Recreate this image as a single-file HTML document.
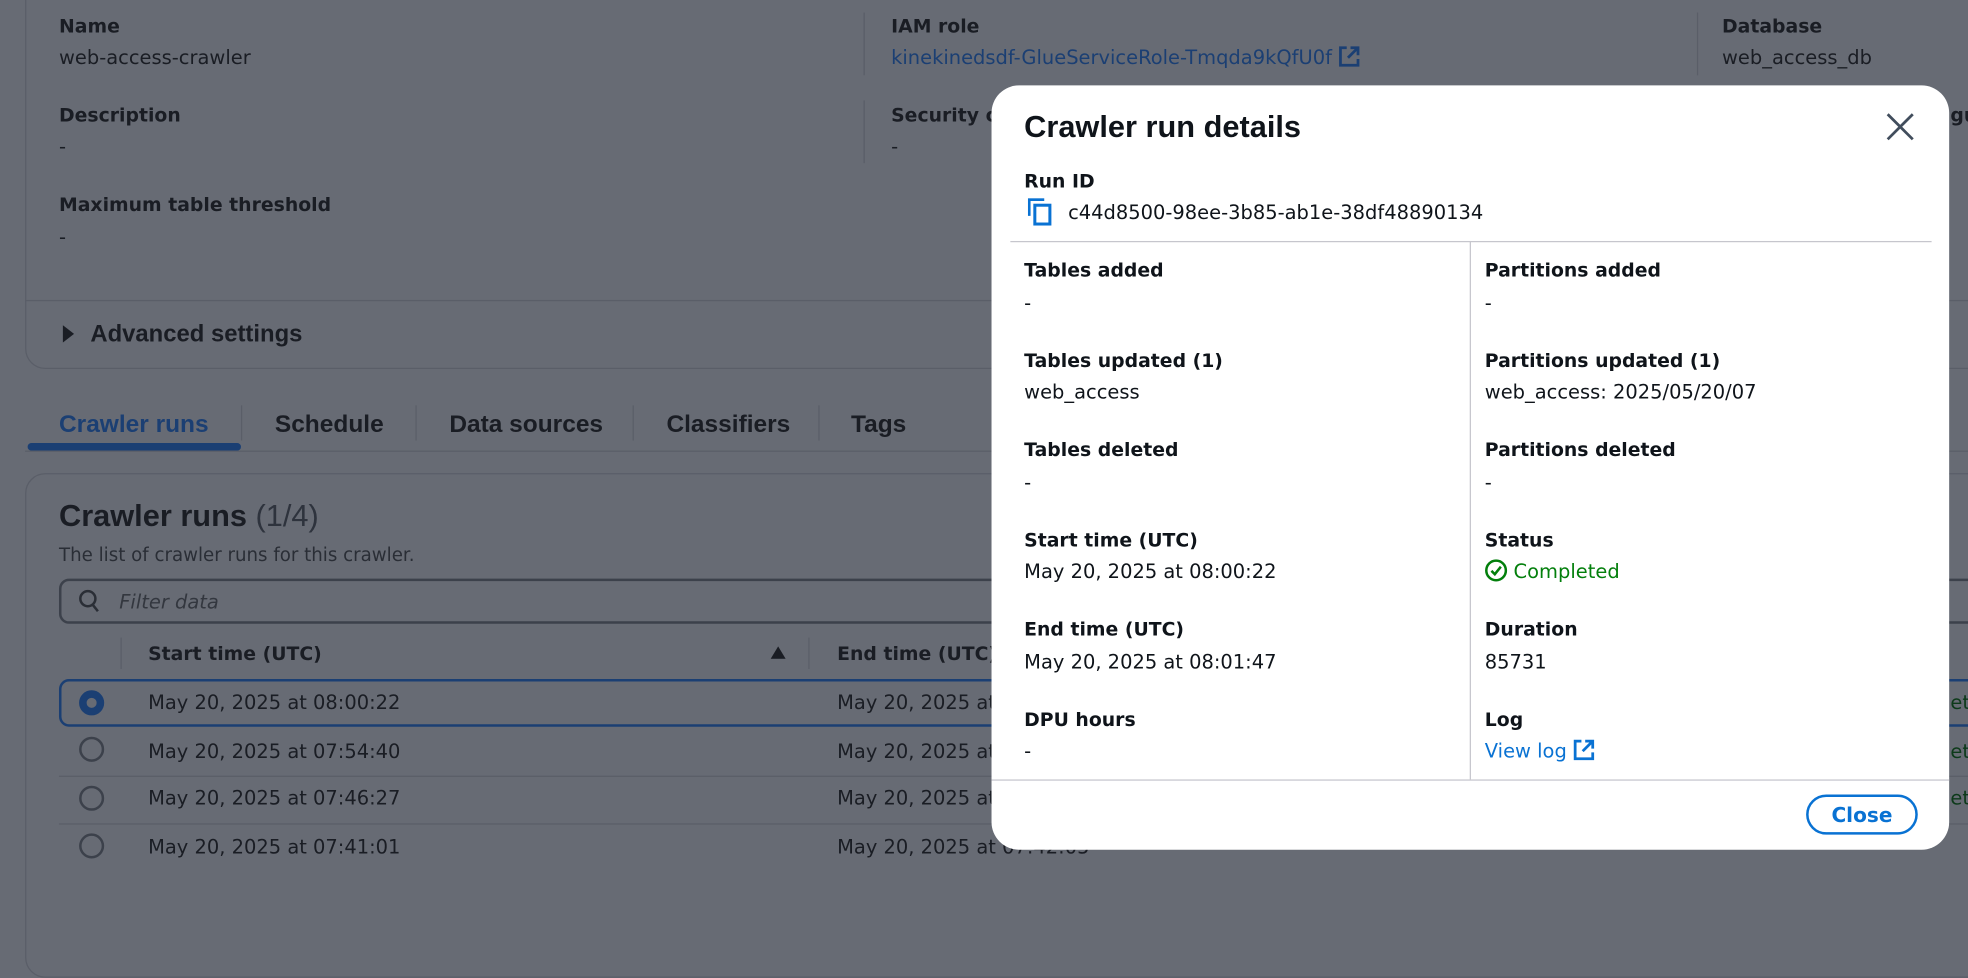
<!DOCTYPE html>
<html><head><meta charset="utf-8"><style>
html,body{margin:0;padding:0;width:1968px;height:873px;overflow:hidden;background:#676b74;}
#w{position:absolute;left:0;top:0;width:1568px;height:696px;transform:scale(1.2551);transform-origin:0 0;font-family:"DejaVu Sans","Liberation Sans",sans-serif;font-size:15.5px;color:#1a1d24;}
.a{position:absolute;white-space:nowrap;line-height:20px;transform:translateY(1px);}
.b{font-weight:bold;font-size:15px;}
.L{font-family:"Liberation Sans",sans-serif;}
.lk{color:#1b3f73;}
.vl{position:absolute;width:1px;background:#5a5e68;}
.hl{position:absolute;height:1px;background:#5a5e68;}
.m{position:absolute;left:790px;top:68px;width:763px;height:609px;background:#fff;border-radius:22px;color:#0f141a;}
.m .a{transform:translateY(-9.5px);}
</style></head><body><div id="w">
<div style="position:absolute;left:20px;top:-20px;width:1600px;height:312px;border:1px solid #5a5e68;border-radius:16px;"></div>
<div class="a b" style="left:47px;top:10px">Name</div>
<div class="a" style="left:47px;top:35px">web-access-crawler</div>
<div class="vl" style="left:688px;top:10px;height:50px"></div>
<div class="vl" style="left:688px;top:80px;height:50px"></div>
<div class="vl" style="left:1352px;top:10px;height:50px"></div>
<div class="a b" style="left:710px;top:10px">IAM role</div>
<div class="a lk" style="left:710px;top:35px">kinekinedsdf-GlueServiceRole-Tmqda9kQfU0f <svg width="18" height="18" style="vertical-align:-3px"><path d="M7 2H2V16H16V11" fill="none" stroke="#1b3f73" stroke-width="2.2"/><path d="M10 2H16V8M16 2L8 10" fill="none" stroke="#1b3f73" stroke-width="2.2"/></svg></div>
<div class="a b" style="left:1372px;top:10px">Database</div>
<div class="a" style="left:1372px;top:35px">web_access_db</div>
<div class="a b" style="left:47px;top:81px">Description</div>
<div class="a" style="left:47px;top:106px">-</div>
<div class="a b" style="left:710px;top:81px">Security c</div>
<div class="a" style="left:710px;top:106px">-</div>
<div class="a b" style="left:47px;top:152px">Maximum table threshold</div>
<div class="a" style="left:47px;top:178px">-</div>
<div class="hl" style="left:20px;top:239px;width:1600px"></div>
<svg style="position:absolute;left:50px;top:259px" width="10" height="14"><path d="M0 0L9 7L0 14Z" fill="#1a1d24"/></svg>
<div class="a b L" style="left:72px;top:256px;font-size:19px">Advanced settings</div>
<div class="a b L" style="left:47px;top:327px;font-size:19.5px;color:#1b3f73">Crawler runs</div>
<div class="a b L" style="left:219px;top:327px;font-size:19.5px">Schedule</div>
<div class="a b L" style="left:358px;top:327px;font-size:19.5px">Data sources</div>
<div class="a b L" style="left:531px;top:327px;font-size:19.5px">Classifiers</div>
<div class="a b L" style="left:678px;top:327px;font-size:19.5px">Tags</div>
<div class="vl" style="left:192px;top:323px;height:28px"></div>
<div class="vl" style="left:331px;top:323px;height:28px"></div>
<div class="vl" style="left:504px;top:323px;height:28px"></div>
<div class="vl" style="left:652px;top:323px;height:28px"></div>
<div style="position:absolute;left:22px;top:353px;width:170px;height:6px;border-radius:3px;background:#1b3f73"></div>
<div class="hl" style="left:20px;top:359px;width:1600px"></div>
<div style="position:absolute;left:20px;top:377px;width:1600px;height:400px;border:1px solid #5a5e68;border-radius:16px;"></div>
<div class="a b L" style="left:47px;top:397px;font-size:24.5px;line-height:28px">Crawler runs <span style="font-weight:normal;color:#2e333d">(1/4)</span></div>
<div class="a" style="left:47px;top:432px;font-size:14.5px;color:#2a2e36">The list of crawler runs for this crawler.</div>
<div style="position:absolute;left:47px;top:461px;width:1600px;height:32px;border:2px solid #3c414b;border-radius:8px"></div>
<svg style="position:absolute;left:62px;top:469px" width="18" height="20"><circle cx="8" cy="8" r="6" fill="none" stroke="#2a2e36" stroke-width="2"/><line x1="12" y1="13" x2="16" y2="18" stroke="#2a2e36" stroke-width="2"/></svg>
<div class="a" style="left:95px;top:469px;font-style:italic;color:#33373f">Filter data</div>
<div class="vl" style="left:96px;top:508px;height:25px"></div>
<div class="a b" style="left:118px;top:510px">Start time (UTC)</div>
<svg style="position:absolute;left:614px;top:515px" width="12" height="10"><path d="M0 10L6 0L12 10Z" fill="#1a1d24"/></svg>
<div class="vl" style="left:644px;top:508px;height:25px"></div>
<div class="a b" style="left:667px;top:510px">End time (UTC)</div>
<div style="position:absolute;left:47px;top:541px;width:1600px;height:34px;border:2px solid #1b3f73;border-radius:8px"></div>
<div style="position:absolute;left:63px;top:550px;width:20px;height:20px;border:6px solid #1b3f73;border-radius:50%;background:#676b74;box-sizing:border-box"></div>
<div class="a" style="left:118px;top:549px">May 20, 2025 at 08:00:22</div>
<div class="a" style="left:667px;top:549px">May 20, 2025 at 08:01:47</div>
<div style="position:absolute;left:63px;top:587px;border:2px solid #3c414b;border-radius:50%;box-sizing:border-box;width:20px;height:20px"></div>
<div class="a" style="left:118px;top:588px">May 20, 2025 at 07:54:40</div>
<div class="a" style="left:667px;top:588px">May 20, 2025 at 07:55:41</div>
<div class="hl" style="left:47px;top:618px;width:1600px"></div>
<div style="position:absolute;left:63px;top:626px;border:2px solid #3c414b;border-radius:50%;box-sizing:border-box;width:20px;height:20px"></div>
<div class="a" style="left:118px;top:625px">May 20, 2025 at 07:46:27</div>
<div class="a" style="left:667px;top:625px">May 20, 2025 at 07:47:30</div>
<div class="hl" style="left:47px;top:656px;width:1600px"></div>
<div style="position:absolute;left:63px;top:664px;border:2px solid #3c414b;border-radius:50%;box-sizing:border-box;width:20px;height:20px"></div>
<div class="a" style="left:118px;top:664px">May 20, 2025 at 07:41:01</div>
<div class="a" style="left:667px;top:664px">May 20, 2025 at 07:42:05</div>
<div class="a" style="left:1554px;top:549px;color:#0d3a1a">ete</div>
<div class="a" style="left:1554px;top:588px;color:#0d3a1a">ete</div>
<div class="a" style="left:1554px;top:625px;color:#0d3a1a">ete</div>
<div class="a b" style="left:1554px;top:81px">gu</div>
<div class="m">
<div class="a b L" style="left:26px;top:33px;font-size:24.5px;line-height:28px;transform:translateY(-13px)">Crawler run details</div>
<svg style="position:absolute;left:712px;top:21px" width="24" height="24"><path d="M2 2L22 22M22 2L2 22" stroke="#414d5c" stroke-width="2.2" fill="none"/></svg>
<div class="a b" style="left:26px;top:76px">Run ID</div>
<svg style="position:absolute;left:29px;top:90px" width="22" height="22"><path d="M1 14V1H13" stroke="#0972d3" stroke-width="2.2" fill="none"/><rect x="5.5" y="5.5" width="12" height="15" stroke="#0972d3" stroke-width="2.4" fill="none"/></svg>
<div class="a" style="left:61px;top:101px">c44d8500-98ee-3b85-ab1e-38df48890134</div>
<div style="position:absolute;left:15px;top:124px;width:734px;height:1px;background:#c6c6cd"></div>
<div style="position:absolute;left:381px;top:124px;width:1px;height:429px;background:#c6c6cd"></div>
<div class="a b" style="left:26px;top:147px">Tables added</div><div class="a" style="left:26px;top:173px">-</div>
<div class="a b" style="left:26px;top:219px">Tables updated (1)</div><div class="a" style="left:26px;top:244px">web_access</div>
<div class="a b" style="left:26px;top:290px">Tables deleted</div><div class="a" style="left:26px;top:316px">-</div>
<div class="a b" style="left:26px;top:362px">Start time (UTC)</div><div class="a" style="left:26px;top:387px">May 20, 2025 at 08:00:22</div>
<div class="a b" style="left:26px;top:433px">End time (UTC)</div><div class="a" style="left:26px;top:459px">May 20, 2025 at 08:01:47</div>
<div class="a b" style="left:26px;top:505px">DPU hours</div><div class="a" style="left:26px;top:530px">-</div>
<div class="a b" style="left:393px;top:147px">Partitions added</div><div class="a" style="left:393px;top:173px">-</div>
<div class="a b" style="left:393px;top:219px">Partitions updated (1)</div><div class="a" style="left:393px;top:244px">web_access: 2025/05/20/07</div>
<div class="a b" style="left:393px;top:290px">Partitions deleted</div><div class="a" style="left:393px;top:316px">-</div>
<div class="a b" style="left:393px;top:362px">Status</div>
<div class="a" style="left:393px;top:387px;color:#037f0c"><svg width="18" height="18" style="vertical-align:-3px"><circle cx="9" cy="9" r="7.8" fill="none" stroke="#037f0c" stroke-width="2"/><path d="M5.3 9.3L8 12L12.8 6" fill="none" stroke="#037f0c" stroke-width="2"/></svg> Completed</div>
<div class="a b" style="left:393px;top:433px">Duration</div><div class="a" style="left:393px;top:459px">85731</div>
<div class="a b" style="left:393px;top:505px">Log</div>
<div class="a" style="left:393px;top:530px;color:#0972d3">View log <svg width="18" height="18" style="vertical-align:-3px"><path d="M7 2H2V16H16V11" fill="none" stroke="#0972d3" stroke-width="2.2"/><path d="M10 2H16V8M16 2L8 10" fill="none" stroke="#0972d3" stroke-width="2.2"/></svg></div>
<div style="position:absolute;left:0;top:553px;width:763px;height:1px;background:#c6c6cd"></div>
<div style="position:absolute;left:649px;top:565px;width:89px;height:32px;border:2px solid #0972d3;border-radius:20px;box-sizing:border-box;color:#0972d3;font-weight:bold;font-size:16px;text-align:center;line-height:29px">Close</div>
</div>
</div></body></html>
